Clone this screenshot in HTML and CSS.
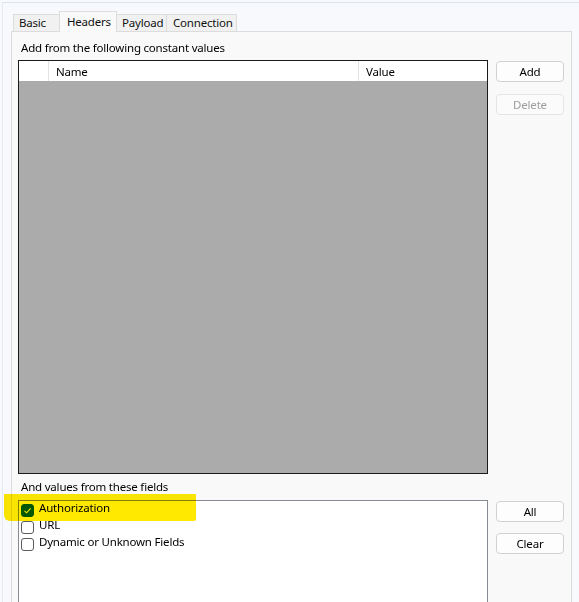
FILE: index.html
```html
<!DOCTYPE html>
<html>
<head>
<meta charset="utf-8">
<link rel="stylesheet" href="styles.css">
</head>
<body>
<div class="frame">
  <div class="tabs">
    <div class="tab">Basic</div>
    <div class="tab active">Headers</div>
    <div class="tab">Payload</div>
    <div class="tab">Connection</div>
  </div>
  <div class="panel">
    <div class="label">Add from the following constant values</div>
    <div class="row">
      <div class="table">
        <div class="thead">
          <div class="th th-idx"></div>
          <div class="th th-name">Name</div>
          <div class="th th-value">Value</div>
        </div>
        <div class="tbody"></div>
      </div>
      <div class="buttons">
        <button class="btn">Add</button>
        <button class="btn disabled">Delete</button>
      </div>
    </div>
    <div class="label label2">And values from these fields</div>
    <div class="row">
      <div class="list">
        <div class="item"><span class="cb checked"><svg viewBox="0 0 13 13" width="13" height="13"><path d="M3.5 6.8 L5.6 8.8 L9.6 4.4" fill="none" stroke="#fff" stroke-width="1.1"/></svg></span><span class="txt">Authorization</span></div>
        <div class="item"><span class="cb"></span><span class="txt">URL</span></div>
        <div class="item"><span class="cb"></span><span class="txt">Dynamic or Unknown Fields</span></div>
      </div>
      <div class="buttons buttons2">
        <button class="btn">All</button>
        <button class="btn">Clear</button>
      </div>
    </div>
  </div>
</div>
<div class="highlight"></div>
</body>
</html>
```

FILE: styles.css
```css
html, body {
  margin: 0;
  padding: 0;
  height: 100%;
  overflow: hidden;
}
body {
  background: #f8f9fc;
  font-family: "Noto Sans", "Open Sans", sans-serif;
  font-size: 11.5px;
  letter-spacing: -0.2px;
  color: #000;
}
.frame {
  margin: 2px 0 0 2px;
  border-top: 1px solid #dde4ef;
  border-left: 1px solid #e6eaf1;
  padding: 8px 0 0 8px;
  height: 700px;
  box-sizing: border-box;
}
.tabs {
  display: flex;
  align-items: flex-end;
  margin-left: 2px;
  height: 20px;
  position: relative;
  z-index: 1;
}
.tab {
  box-sizing: border-box;
  height: 17px;
  line-height: 16px;
  padding: 0 0 0 5px;
  border: 1px solid #dcdcdc;
  border-bottom: none;
  background: #f1f1f1;
  color: #111;
  margin-right: -1px;
  white-space: nowrap;
}
.tab:nth-child(1) { width: 47px; }
.tab:nth-child(2) { width: 58px; padding-left: 7px; }
.tab:nth-child(3) { width: 51px; }
.tab:nth-child(4) { width: 71px; padding-left: 6px; }
.tab.active {
  height: 21px;
  line-height: 17px;
  background: #f9f9f9;
  margin-bottom: -1px;
  padding-top: 1px;
}
.panel {
  width: 561px;
  box-sizing: border-box;
  border: 1px solid #dcdcdc;
  background: #f9f9f9;
  height: 650px;
  padding: 8px 0 0 6px;
}
.label {
  height: 16px;
  line-height: 16px;
  padding-left: 3px;
  margin-bottom: 4px;
}
.label2 {
  margin-top: 5px;
  margin-bottom: 5px;
}
.row {
  display: flex;
  gap: 8px;
}
.table {
  width: 470px;
  height: 414px;
  box-sizing: border-box;
  border: 1px solid #1a1a1a;
  display: flex;
  flex-direction: column;
}
.thead {
  display: flex;
  height: 20px;
  background: #fff;
}
.th {
  line-height: 21px;
  box-sizing: border-box;
}
.th-idx {
  width: 30px;
  border-right: 1px solid #e3e3e3;
}
.th-name {
  width: 310px;
  padding-left: 7px;
  border-right: 1px solid #e3e3e3;
}
.th-value {
  flex: 1;
  padding-left: 7px;
}
.tbody {
  flex: 1;
  background: #ababab;
}
.buttons {
  display: flex;
  flex-direction: column;
  gap: 12px;
  padding-top: 1px;
}
.buttons2 {
  gap: 11px;
}
.btn {
  width: 68px;
  height: 21px;
  box-sizing: border-box;
  border: 1px solid #d2d2d2;
  border-radius: 4px;
  background: #fdfdfd;
  font-family: inherit;
  font-size: 11.5px;
  letter-spacing: -0.2px;
  color: #000;
  padding: 0;
  line-height: 18px;
}
.btn.disabled {
  color: #9d9d9d;
  border-color: #e4e4e4;
  background: #fbfbfb;
}
.list {
  width: 470px;
  height: 130px;
  box-sizing: border-box;
  border: 1px solid #868a91;
  background: #fff;
  padding: 3px 0 0 2px;
}
.item {
  height: 17px;
  display: flex;
  align-items: flex-start;
  gap: 5px;
}
.txt {
  line-height: 8px;
  padding-top: 0;
}
.cb {
  width: 13px;
  height: 13px;
  box-sizing: border-box;
  border: 1px solid #5b5b5b;
  border-radius: 3px;
  background: #fff;
  flex: none;
  display: block;
}
.cb svg { display: block; margin: -1px; }
.cb.checked {
  background: #005fb8;
  border-color: #005fb8;
}
.highlight {
  position: absolute;
  left: 4px;
  top: 494px;
  width: 192px;
  height: 27px;
  background: #ffe900;
  mix-blend-mode: multiply;
  border-radius: 1px 1px 2px 6px;
}
```
